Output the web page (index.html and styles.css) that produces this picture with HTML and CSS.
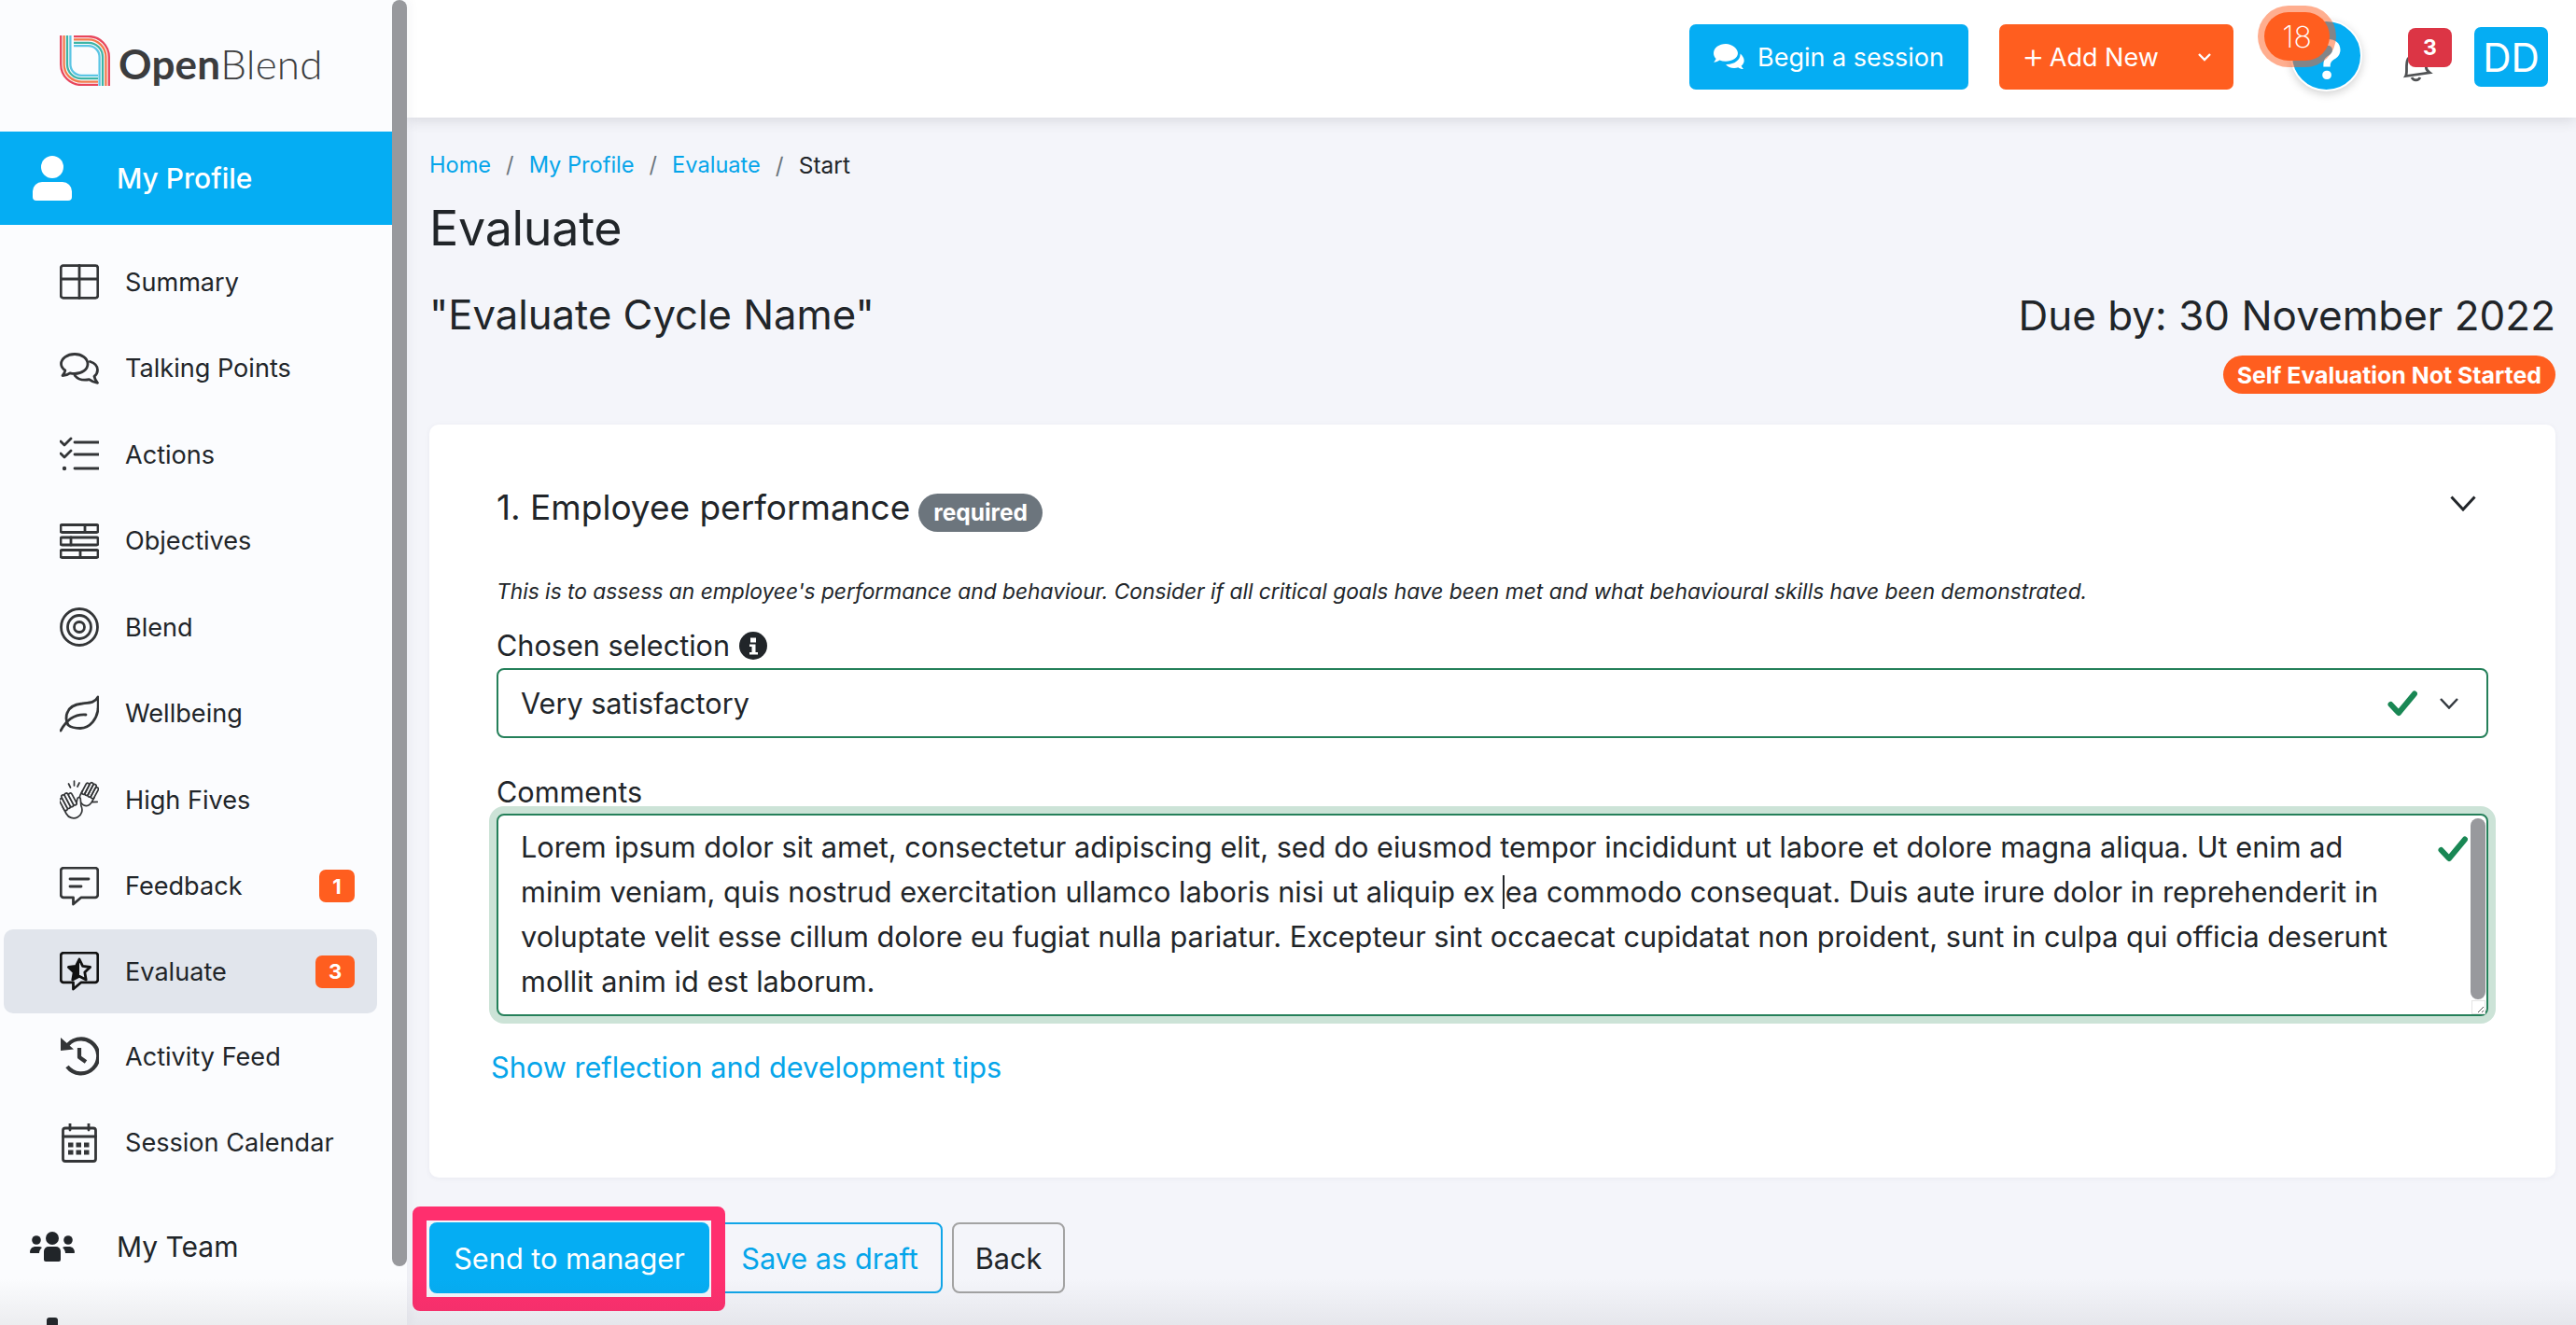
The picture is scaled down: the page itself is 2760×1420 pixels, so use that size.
FILE: index.html
```html
<!DOCTYPE html>
<html lang="en">
<head>
<meta charset="utf-8">
<title>Evaluate - OpenBlend</title>
<link rel="stylesheet" href="styles.css">
</head>
<body>
<div class="app">
  <aside class="sidebar">
    <nav class="nav">
      <div class="logo">
        <svg class="logo-mark" viewBox="0 0 54 54" fill="none" stroke-width="2.300">
          <path stroke="#e8465c" d="M1.200 0V31a22 22 0 0 0 22 22H41"/>
          <path stroke="#f47a4c" d="M4.600 0V31a18.600 18.600 0 0 0 18.600 18.600H41"/>
          <path stroke="#3db4a6" d="M8 0V31a15.200 15.200 0 0 0 15.200 15.200H41"/>
          <path stroke="#5bc5e4" d="M11.400 0V31a11.800 11.800 0 0 0 11.800 11.800H41"/>
          <path stroke="#e8465c" d="M52.800 54V23a22 22 0 0 0-22-22H15"/>
          <path stroke="#f47a4c" d="M49.400 54V23a18.600 18.600 0 0 0-18.600-18.600H15"/>
          <path stroke="#3db4a6" d="M46 54V23a15.200 15.200 0 0 0-15.200-15.200H15"/>
          <path stroke="#5bc5e4" d="M42.600 54V23a11.800 11.800 0 0 0-11.800-11.800H15"/>
        </svg>
        <span class="logo-text"><b>Open</b>Blend</span>
      </div>

      <a class="top-item top-active">
        <svg class="top-icon" viewBox="0 0 42 48" fill="currentColor"><circle cx="21" cy="12" r="12"/><path d="M10 28h22a10 10 0 0 1 10 10v6a4 4 0 0 1-4 4H4a4 4 0 0 1-4-4v-6a10 10 0 0 1 10-10z"/></svg>
        <span>My Profile</span>
      </a>

      <div class="sub-list">
        <a class="sub-item">
          <svg class="sub-icon" viewBox="0 0 42 37"><rect x="1.200" y="1.200" width="39.600" height="34.600" rx="2.500"/><path d="M21 1v35M1 15.500h40"/></svg>
          <span>Summary</span>
        </a>
        <a class="sub-item">
          <svg class="sub-icon" viewBox="0 0 42 34"><path d="M16 1.500c8 0 14 4.700 14 10.500s-6 10.500-14 10.500c-2 0-3.500-.2-5-.7-2 1.500-5 2.700-8 2.700 1.500-1.500 2.500-3.500 2.800-5.500C3 17 1.500 14.700 1.500 12 1.500 6.200 8 1.500 16 1.500z"/><path d="M32.500 9.500c4.700 1.500 8 5 8 9 0 2.600-1.300 5-3.500 6.800.3 2.200 1.300 4.500 3.500 7-3.500-.3-6.500-1.700-9-3.600-1.500.4-2.800.5-4.500.5-4.500 0-8.500-1.800-10.800-4.700"/></svg>
          <span>Talking Points</span>
        </a>
        <a class="sub-item">
          <svg class="sub-icon" viewBox="0 0 42 38"><path d="M1 5l4 4 7-7M1 18l4 4 7-7"/><circle cx="5" cy="34" r="2.200" class="ic-fill"/><path d="M16 6h26M16 19h26M16 34h26"/></svg>
          <span>Actions</span>
        </a>
        <a class="sub-item">
          <svg class="sub-icon" viewBox="0 0 42 37"><rect x="1" y="1" width="40" height="8" rx="1.500"/><rect x="1" y="14.500" width="40" height="8" rx="1.500"/><rect x="1" y="28" width="40" height="8" rx="1.500"/><path d="M27 1v8M12 14.500v8M22 28v8"/></svg>
          <span>Objectives</span>
        </a>
        <a class="sub-item">
          <svg class="sub-icon" viewBox="0 0 42 42"><circle cx="21" cy="21" r="19.500"/><circle cx="21" cy="21" r="12.500"/><circle cx="21" cy="21" r="5.500"/></svg>
          <span>Blend</span>
        </a>
        <a class="sub-item">
          <svg class="sub-icon" viewBox="0 0 42 38"><path d="M41 1c-3 6-9 6-17 7C14 9 7 14 7 24c0 3 1 5 2 7 3 2.500 7 3.500 13 3.500C33 34 40 24 41 14c.3-4.500.3-9 0-13z"/><path d="M1 37c6-11 14-18 27-17"/></svg>
          <span>Wellbeing</span>
        </a>
        <a class="sub-item">
          <svg class="sub-icon sub-icon-hands" viewBox="0 0 42 42">
            <g transform="rotate(28 31 15)">
              <rect x="23.500" y="5" width="3.600" height="13" rx="1.800"/><rect x="27.100" y="2.500" width="3.600" height="15" rx="1.800"/><rect x="30.700" y="2.500" width="3.600" height="15" rx="1.800"/><rect x="34.300" y="4.500" width="3.600" height="13" rx="1.800"/>
              <path d="M23.500 15v5a8 8 0 0 0 8 8c4 0 6.500-3 6.500-8v-5M38 21l5-3"/>
            </g>
            <g transform="rotate(-28 14 30)">
              <path class="hand-fill" d="M5 24v8a9 9 0 0 0 18 0l3-7c.7-2-2-3-3.300-1.200L20 27V24z"/>
              <rect class="hand-fill" x="5" y="15" width="3.800" height="14" rx="1.900"/><rect class="hand-fill" x="8.800" y="12.500" width="3.800" height="16" rx="1.900"/><rect class="hand-fill" x="12.600" y="12.500" width="3.800" height="16" rx="1.900"/><rect class="hand-fill" x="16.400" y="14.500" width="3.800" height="14" rx="1.900"/>
            </g>
            <path d="M9.500 4l2 4M15.500 1v5M21 3l-2 4"/>
          </svg>
          <span>High Fives</span>
        </a>
        <a class="sub-item">
          <svg class="sub-icon" viewBox="0 0 42 42"><path d="M4 1.200h34a2.800 2.800 0 0 1 2.800 2.800v26a2.800 2.800 0 0 1-2.800 2.800H23L14.500 40v-7.200H4A2.800 2.800 0 0 1 1.200 30V4A2.800 2.800 0 0 1 4 1.200z"/><path d="M11 13h20M11 21h12"/></svg>
          <span>Feedback</span>
          <em class="count count-narrow">1</em>
        </a>
        <a class="sub-item sub-active">
          <svg class="sub-icon sub-icon-dark" viewBox="0 0 42 42"><path d="M4 1.200h34a2.800 2.800 0 0 1 2.800 2.800v26a2.800 2.800 0 0 1-2.800 2.800H23L14.500 40v-7.200H4A2.800 2.800 0 0 1 1.200 30V4A2.800 2.800 0 0 1 4 1.200z"/><path d="M21 8l3.600 7.400 8 1.100-5.800 5.600 1.400 8L21 26.300l-7.200 3.800 1.400-8-5.800-5.600 8-1.100z"/><path class="ic-fill" d="M21 8v18.300l-7.200 3.800 1.400-8-5.800-5.600 8-1.100z"/></svg>
          <span>Evaluate</span>
          <em class="count">3</em>
        </a>
        <a class="sub-item">
          <svg class="sub-icon" viewBox="0 0 42 42"><path class="ic-heavy" d="M6.500 12A18.500 18.500 0 1 1 8 32"/><path class="ic-fill ic-none" d="M1 1l14 12.500-14 1.500z"/><path class="ic-heavy" d="M21 12v10l7 5"/></svg>
          <span>Activity Feed</span>
        </a>
        <a class="sub-item">
          <svg class="sub-icon" viewBox="0 0 42 42"><rect x="3.500" y="5" width="35" height="35.500" rx="2.500"/><path d="M3.500 14h35M11 0v7M31 0v7"/><path class="ic-dash" d="M9 23h24M9 31h24"/></svg>
          <span>Session Calendar</span>
        </a>
      </div>

      <a class="top-item top-team">
        <svg class="top-icon top-icon-wide" viewBox="0 0 48 32" fill="currentColor"><circle cx="24" cy="7" r="7"/><circle cx="7" cy="9" r="4.800"/><circle cx="41" cy="9" r="4.800"/><path d="M15 21a5 5 0 0 1 5-5h8a5 5 0 0 1 5 5v9a2 2 0 0 1-2 2H17a2 2 0 0 1-2-2z"/><path d="M0 22.500C0 18 3 16 6 16h4c1.200 0 2 .3 3 1-1.800 1.500-3 3.500-3 6H2a2 2 0 0 1-2-.5zM48 22.500c0-4.500-3-6.500-6-6.500h-4c-1.200 0-2 .3-3 1 1.800 1.500 3 3.500 3 6h8a2 2 0 0 0 2-.5z"/></svg>
        <span>My Team</span>
      </a>
      <a class="top-item">
        <svg class="top-icon" viewBox="0 0 42 48" fill="currentColor"><rect x="15" y="0" width="12" height="10" rx="3"/><rect x="4" y="14" width="34" height="34" rx="4"/></svg>
      </a>
    </nav>
    <div class="side-track"><div class="side-thumb"></div></div>
  </aside>

  <div class="main">
    <header class="topbar">
      <button class="bar-btn bar-blue" type="button">
        <svg class="bar-chat" viewBox="0 0 34 28" fill="currentColor"><path d="M13 0C6 0 0 4.300 0 10c0 2.300 1 4.400 2.600 6-.6 1.500-1.700 2.800-2.500 3.700 2.500 0 4.800-1 6.300-2.100 2 .8 4.200 1.200 6.600 1.200 7 0 13-4 13-8.800S20 0 13 0z"/><path d="M28.500 9.500c.1.500.1 1 .1 1.500 0 6.500-6.500 10.800-14 11-.5 0-1 0-1.500-.1 1.800 2.500 5 4 9 4 1.500 0 3-.2 4.200-.7 1.400 1 3.300 1.800 5.700 1.800-.8-.9-1.800-2-2.300-3.400 1.800-1.500 3-3.500 3-5.600 0-3-1.800-5.500-4.200-7.500z"/></svg>
        <span>Begin a session</span>
      </button>
      <button class="bar-btn bar-orange" type="button">
        <span class="add-plus">+</span>
        <span class="add-label">Add New</span>
        <svg class="bar-caret" viewBox="0 0 16 10"><path d="M2 2l6 6 6-6"/></svg>
      </button>
      <div class="help">
        <span class="help-mark">?</span>
        <span class="help-count">18</span>
      </div>
      <div class="bell">
        <svg class="bell-icon" viewBox="0 0 40 40"><path d="M8 30c3-4 1-12 5-18 3-4 9-5 13-2s6 8 5 13c-.5 3 1 5 3 7z" transform="rotate(-8 20 20)"/><path d="M16 33a5 5 0 0 0 9 0"/></svg>
        <span class="bell-count">3</span>
      </div>
      <div class="avatar">DD</div>
    </header>

    <main class="content">
      <ol class="crumbs">
        <li><a>Home</a></li>
        <li><a>My Profile</a></li>
        <li><a>Evaluate</a></li>
        <li class="crumb-current">Start</li>
      </ol>
      <h1 class="page-title">Evaluate</h1>
      <div class="cycle-row">
        <h2 class="cycle-name">"Evaluate Cycle Name"</h2>
        <div class="cycle-due">Due by: 30 November 2022</div>
      </div>
      <div class="status-row"><span class="status-pill">Self Evaluation Not Started</span></div>

      <section class="card">
        <div class="q-head">
          <h3 class="q-title">1. Employee performance</h3>
          <span class="q-req">required</span>
          <svg class="q-chevron" viewBox="0 0 28 17"><path d="M1.500 1.500L14 15 26.500 1.500"/></svg>
        </div>
        <p class="q-desc">This is to assess an employee's performance and behaviour. Consider if all critical goals have been met and what behavioural skills have been demonstrated.</p>
        <div class="field-label field-label-first">
          <span>Chosen selection</span>
          <svg class="info" viewBox="0 0 30 30"><circle cx="15" cy="15" r="15" fill="#212529"/><path fill="#fff" d="M12 6.500h6v5h-6zM11 13.500h6.500V22H20v2.500h-9V22h2.500v-6H11z"/></svg>
        </div>
        <div class="select">
          <span class="select-value">Very satisfactory</span>
          <svg class="tick" viewBox="0 0 32 28"><path d="M3.500 15L12 24 29 3.500"/></svg>
          <svg class="select-caret" viewBox="0 0 20 12"><path d="M1 1l9 9.500L19 1"/></svg>
        </div>
        <div class="field-label field-label-second"><span>Comments</span></div>
        <div class="textarea">
          <div class="textarea-text">Lorem ipsum dolor sit amet, consectetur adipiscing elit, sed do eiusmod tempor incididunt ut labore et dolore magna aliqua. Ut enim ad minim veniam, quis nostrud exercitation ullamco laboris nisi ut aliquip ex <i class="caret"></i>ea commodo consequat. Duis aute irure dolor in reprehenderit in voluptate velit esse cillum dolore eu fugiat nulla pariatur. Excepteur sint occaecat cupidatat non proident, sunt in culpa qui officia deserunt mollit anim id est laborum.</div>
          <svg class="tick tick-area" viewBox="0 0 32 28"><path d="M3.500 15L12 24 29 3.500"/></svg>
          <div class="area-thumb"></div>
          <svg class="area-grip" viewBox="0 0 15 15"><rect x=".5" y=".5" width="14" height="14" fill="#fff" stroke="#e4e4e4"/><path d="M7 13l6-6M11 13l2-2" stroke="#555" fill="none"/></svg>
        </div>
        <a class="tips">Show reflection and development tips</a>
      </section>

      <div class="actions">
        <div class="send-wrap">
          <button class="act act-primary" type="button">Send to manager</button>
          <div class="highlight"></div>
        </div>
        <button class="act act-outline" type="button">Save as draft</button>
        <button class="act act-plain" type="button">Back</button>
      </div>
    </main>
  </div>
  <div class="bottom-fade"></div>
</div>
</body>
</html>
```
FILE: styles.css
```css
* { box-sizing: border-box; }
html, body { margin: 0; padding: 0; height: 100%; }
body {
  font-family: Inter, "Liberation Sans", sans-serif;
  color: #212529;
  background: #f4f5fa;
  overflow: hidden;
}
.app { position: relative; display: flex; height: 1420px; overflow: hidden; }

/* sidebar */
.sidebar { display: flex; width: 436px; flex: none; background: #fbfcfe; position: relative; z-index: 3; box-shadow: 4px 0 10px rgba(40, 40, 70, .04); }
.nav { width: 420px; flex: none; display: flex; flex-direction: column; }
.side-track { width: 16px; flex: none; }
.side-thumb { height: 1357px; background: #98999d; border-radius: 8px; }

.logo { height: 141px; flex: none; padding: 38px 0 0 64px; display: flex; align-items: flex-start; gap: 9px; }
.logo-mark { width: 54px; height: 54px; flex: none; }
.logo-text { font-family: Lato, sans-serif; font-size: 44px; line-height: 52px; margin-top: 4px; color: #3b3c3e; font-weight: 300; letter-spacing: .2px; }
.logo-text b { font-weight: 700; }

.top-item { height: 100px; flex: none; display: flex; align-items: center; padding-left: 35px; gap: 48px; font-size: 30px; color: #212529; }
.top-active { background: #05adf3; color: #fff; font-weight: 500; }
.top-icon { width: 42px; height: 48px; flex: none; }
.top-icon-wide { width: 48px; height: 32px; margin-left: -3px; margin-right: -3px; }
.top-team { margin-top: 15px; color: #212529; }

.sub-list { margin-top: 15px; display: flex; flex-direction: column; }
.sub-item { height: 92.5px; flex: none; display: flex; align-items: center; padding: 0 40px 0 64px; gap: 28px; font-size: 27.100px; color: #212529; }
.sub-item span { flex: 1; }
.sub-active { height: 90px; margin: 0 16px 0 4px; padding: 0 24px 0 60px; background: #e1e5ec; border-radius: 10px; }
.sub-icon { width: 42px; height: 42px; flex: none; fill: none; stroke: #333537; stroke-width: 2.800; stroke-linecap: round; stroke-linejoin: round; }
.sub-icon-hands { stroke-width: 1.700; }
.hand-fill { fill: #fbfcfe; }
.sub-icon-dark { stroke: #111; }
.ic-fill { fill: #333537; stroke: none; }
.sub-icon-dark .ic-fill { fill: #111; }
.ic-none { fill: #333537; }
.ic-heavy { stroke-width: 4.200; stroke-linecap: butt; }
.ic-dash { stroke-width: 5; stroke-dasharray: 5.500 3; stroke-linecap: butt; }
.count { flex: none; width: 42px; height: 35px; border-radius: 7px; background: #ff5e1f; color: #fff; font-style: normal; font-weight: 700; font-size: 22px; display: flex; align-items: center; justify-content: center; }
.count-narrow { width: 38px; }

/* main column */
.main { flex: 1; min-width: 0; display: flex; flex-direction: column; }
.topbar { height: 126px; flex: none; background: #fff; display: flex; align-items: center; justify-content: flex-end; padding: 0 30px 4px 0; box-shadow: 0 3px 14px rgba(40, 40, 60, .14); position: relative; z-index: 2; }
.bar-btn { border: 0; height: 70px; border-radius: 7px; color: #fff; font: inherit; font-size: 27px; display: flex; align-items: center; padding: 0; }
.bar-blue { width: 299px; background: #05adf3; padding-left: 26px; gap: 13px; margin-right: 33px; }
.bar-chat { width: 34px; height: 28px; flex: none; }
.bar-orange { width: 251px; background: #ff5e1f; padding-left: 24px; margin-right: 61px; }
.add-plus { font-size: 38px; font-weight: 300; line-height: 1; margin-top: -4px; margin-right: 5px; }
.add-label { flex: 1; text-align: left; }
.bar-caret { width: 16px; height: 10px; margin-right: 23px; fill: none; stroke: #fff; stroke-width: 2.400; }
.help { position: relative; width: 77px; height: 77px; border-radius: 50%; background: #05adf3; color: #fff; border: 2px solid #fff; box-shadow: 0 3px 10px rgba(0, 0, 0, .18); display: flex; align-items: center; justify-content: center; margin-right: 39px; margin-top: -3px; }
.help-mark { font-size: 56px; font-weight: 700; line-height: 1; margin-top: 8px; margin-left: 4px; }
.help-count { position: absolute; left: -30px; top: -10px; width: 70px; height: 52px; border-radius: 26px; background: #ff5e1f; box-shadow: 0 0 0 7px rgba(255, 94, 31, .5); color: #fff; font-size: 32px; font-weight: 200; display: flex; align-items: center; justify-content: center; }
.bell { position: relative; width: 57px; height: 58px; margin-right: 24px; margin-top: -4px; }
.bell-icon { position: absolute; left: -2px; top: 20px; width: 40px; height: 40px; fill: none; stroke: #505254; stroke-width: 2.800; }
.bell-count { position: absolute; right: 0; top: 0; width: 47px; height: 42px; border-radius: 8px; background: #dc3545; color: #fff; font-size: 23px; font-weight: 700; display: flex; align-items: center; justify-content: center; }
.avatar { width: 79px; height: 64px; border-radius: 7px; background: #05adf3; color: #fff; font-size: 42px; display: flex; align-items: center; justify-content: center; }

.content { flex: 1; min-height: 0; padding: 33px 22px 0 24px; }
.crumbs { list-style: none; margin: 0; padding: 0; display: flex; font-size: 23.600px; line-height: 36px; height: 36px; }
.crumbs a { color: #05a5ea; }
.crumbs li + li::before { content: "/"; color: #6c757d; padding: 0 16px; }
.crumb-current { color: #212529; font-size: 24.500px; }
.page-title { margin: 20px 0 0; font-size: 52px; line-height: 60px; font-weight: 400; letter-spacing: -.3px; }
.cycle-row { margin-top: 36px; display: flex; justify-content: space-between; align-items: center; height: 54px; }
.cycle-name { margin: 0; font-size: 43.600px; line-height: 54px; font-weight: 400; }
.cycle-due { font-size: 44px; line-height: 54px; }
.status-row { margin-top: 16px; display: flex; justify-content: flex-end; }
.status-pill { height: 41px; padding: 0 15px; border-radius: 21px; background: #ff5e1f; color: #fff; font-size: 24.900px; font-weight: 700; display: flex; align-items: center; }

.card { margin-top: 33px; height: 807px; background: #fff; border-radius: 10px; padding: 0 72px; box-shadow: 0 1px 6px rgba(40, 40, 70, .05); }
.q-head { height: 105px; padding-top: 73px; display: flex; align-items: center; }
.q-title { margin: 0; font-size: 37px; font-weight: 400; line-height: 52px; }
.q-req { margin: 10px 0 0 9px; height: 41px; padding: 0 16px; border-radius: 21px; background: #6c757d; color: #fff; font-size: 24.500px; font-weight: 700; display: flex; align-items: center; }
.q-chevron { margin: -9px 13px 0 auto; width: 28px; height: 17px; fill: none; stroke: #212529; stroke-width: 3; }
.q-desc { margin: 0; padding-top: 57px; height: 90px; font-size: 22.770px; line-height: 34px; font-style: italic; white-space: nowrap; }
.field-label { display: flex; align-items: center; gap: 10px; font-size: 30.600px; line-height: 36px; height: 36px; }
.field-label-first { margin-top: 24px; }
.field-label-second { margin-top: 40px; }
.info { width: 30px; height: 30px; flex: none; }
.select { margin-top: 6px; height: 75px; border: 2.500px solid #25805a; border-radius: 8px; display: flex; align-items: center; padding: 0 30px 0 24px; font-size: 30.600px; }
.select-value { flex: 1; }
.tick { width: 32px; height: 28px; fill: none; stroke: #198754; stroke-width: 6; stroke-linecap: round; stroke-linejoin: round; flex: none; }
.select-caret { margin-left: 24px; width: 20px; height: 12px; fill: none; stroke: #343a40; stroke-width: 2.500; }
.textarea { position: relative; margin-top: 5px; height: 217px; border: 2.500px solid #25805a; border-radius: 8px; box-shadow: 0 0 0 8px #cce3d7; padding: 10px 90px 0 24px; font-size: 30.700px; line-height: 48px; background: #fff; }
.textarea-text { width: 2030px; }
.caret { display: inline-block; width: 1.500px; height: 36px; background: #212529; margin: 0 1px 0 0; vertical-align: -7px; }
.tick-area { position: absolute; top: 22px; right: 20px; }
.area-thumb { position: absolute; top: 3px; right: 1px; width: 16px; height: 194px; border-radius: 8px; background: #98999d; }
.area-grip { position: absolute; right: 1px; bottom: 0; width: 15px; height: 15px; }
.tips { display: block; margin: 35px 0 0 -6px; font-size: 30.700px; line-height: 40px; color: #05a5ea; }

.actions { margin-top: 48px; display: flex; align-items: flex-start; }
.send-wrap { position: relative; z-index: 1; }
.highlight { position: absolute; left: -18px; right: -17px; top: -17px; bottom: -19px; border: 15px solid #ff2f6e; border-radius: 8px; }
.act { height: 76px; border-radius: 8px; font: inherit; font-size: 30.700px; background: transparent; color: #212529; padding: 0; }
.act-primary { width: 300px; border: 0; background: #05adf3; color: #fff; display: block; }
.act-outline { width: 242px; margin-left: 8px; border: 2px solid #10a5e8; color: #05a5ea; }
.act-plain { width: 121px; margin-left: 10px; border: 2px solid #a3a3a3; }

.bottom-fade { position: absolute; left: 0; right: 0; bottom: 0; height: 50px; background: linear-gradient(rgba(60, 60, 70, 0), rgba(60, 60, 70, .08)); z-index: 5; pointer-events: none; }
```
